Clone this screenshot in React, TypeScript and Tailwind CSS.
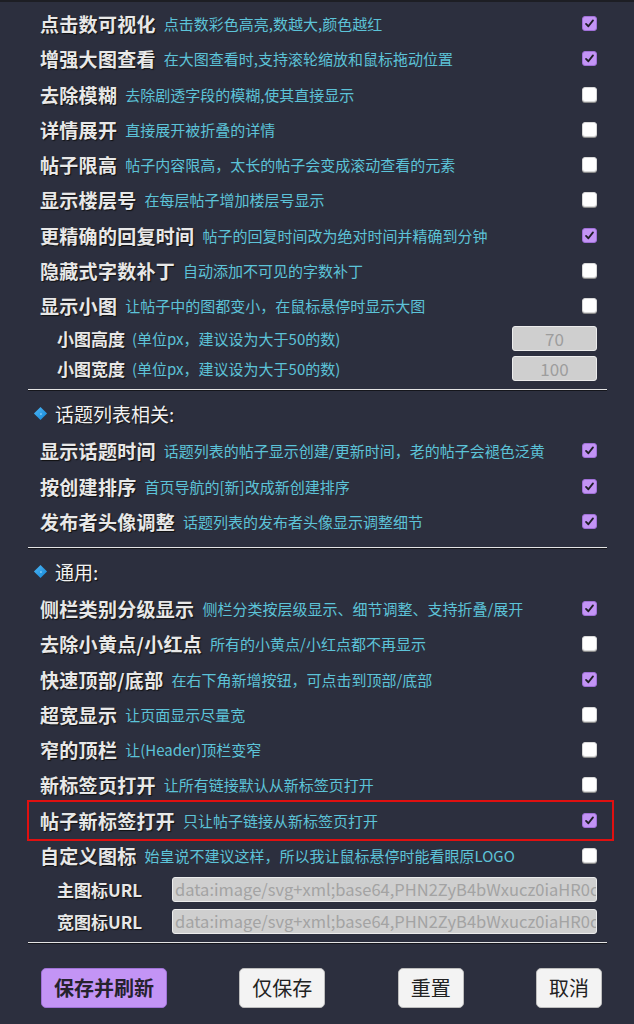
import React from 'react';

type Opt = { title: string; desc: string; checked: boolean; highlight?: boolean };

const postOpts: Opt[] = [
  { title: '点击数可视化', desc: '点击数彩色高亮,数越大,颜色越红', checked: true },
  { title: '增强大图查看', desc: '在大图查看时,支持滚轮缩放和鼠标拖动位置', checked: true },
  { title: '去除模糊', desc: '去除剧透字段的模糊,使其直接显示', checked: false },
  { title: '详情展开', desc: '直接展开被折叠的详情', checked: false },
  { title: '帖子限高', desc: '帖子内容限高，太长的帖子会变成滚动查看的元素', checked: false },
  { title: '显示楼层号', desc: '在每层帖子增加楼层号显示', checked: false },
  { title: '更精确的回复时间', desc: '帖子的回复时间改为绝对时间并精确到分钟', checked: true },
  { title: '隐藏式字数补丁', desc: '自动添加不可见的字数补丁', checked: false },
  { title: '显示小图', desc: '让帖子中的图都变小，在鼠标悬停时显示大图', checked: false },
];

const topicOpts: Opt[] = [
  { title: '显示话题时间', desc: '话题列表的帖子显示创建/更新时间，老的帖子会褪色泛黄', checked: true },
  { title: '按创建排序', desc: '首页导航的[新]改成新创建排序', checked: true },
  { title: '发布者头像调整', desc: '话题列表的发布者头像显示调整细节', checked: true },
];

const commonOpts: Opt[] = [
  { title: '侧栏类别分级显示', desc: '侧栏分类按层级显示、细节调整、支持折叠/展开', checked: true },
  { title: '去除小黄点/小红点', desc: '所有的小黄点/小红点都不再显示', checked: false },
  { title: '快速顶部/底部', desc: '在右下角新增按钮，可点击到顶部/底部', checked: true },
  { title: '超宽显示', desc: '让页面显示尽量宽', checked: false },
  { title: '窄的顶栏', desc: '让(Header)顶栏变窄', checked: false },
  { title: '新标签页打开', desc: '让所有链接默认从新标签页打开', checked: false },
  { title: '帖子新标签打开', desc: '只让帖子链接从新标签页打开', checked: true, highlight: true },
  { title: '自定义图标', desc: '始皇说不建议这样，所以我让鼠标悬停时能看眼原LOGO', checked: false },
];

// the field is narrower than the value, so it gets clipped like in the real input
const URL_VAL = 'data:image/svg+xml;base64,PHN2ZyB4bWxucz0iaHR0cD';

function Check({ on }: { on: boolean }) {
  return on ? (
    <div className="w-[15px] h-[15px] rounded-[3px] bg-[#c394f5] border border-[#a070d8] flex items-center justify-center">
      <svg width="11" height="11" viewBox="0 0 12 12">
        <path d="M2.2 6.4 L4.8 9 L9.8 2.6" fill="none" stroke="#1f1f27" strokeWidth="2" strokeLinecap="round" strokeLinejoin="round" />
      </svg>
    </div>
  ) : (
    <div className="w-[15px] h-[15px] rounded-[3px] bg-white border border-[#d8d8d8] shadow-[0_1px_0_#8a8a8a]" />
  );
}

function Row({ o }: { o: Opt }) {
  return (
    <div
      className={
        o.highlight
          ? 'h-[35.25px] flex items-center ml-[2px] -mr-[5px] pl-[10px] pr-[14px] outline-2 outline-offset-1 outline-[#e01010]'
          : 'h-[35.25px] flex items-center pl-[12px] pr-[9px]'
      }
    >
      <span className="text-[19px] leading-none font-bold tracking-[0.3px] text-[#e8e8e8] [text-shadow:1px_1px_1px_#111] whitespace-nowrap">
        {o.title}
      </span>
      <span className="ml-[8px] text-[15px] leading-none text-[#5cc3d8] whitespace-nowrap">{o.desc}</span>
      <div className="ml-auto">
        <Check on={o.checked} />
      </div>
    </div>
  );
}

function Diamond() {
  return (
    <svg width="15" height="15" viewBox="0 0 16 16">
      <defs>
        <linearGradient id="dg" x1="0" y1="0" x2="1" y2="1">
          <stop offset="0" stopColor="#4fb8f5" />
          <stop offset="1" stopColor="#1386d8" />
        </linearGradient>
      </defs>
      <path d="M8 1 L15 8 L8 15 L1 8 Z" fill="url(#dg)" />
      <circle cx="8.5" cy="8.5" r="0.9" fill="#9ed8ff" />
    </svg>
  );
}

function Section({ label }: { label: string }) {
  return (
    <div className="h-[43px] pt-[14px] flex items-start gap-[7px] pl-[5px]">
      <div className="mt-[2px]">
        <Diamond />
      </div>
      <span className="text-[19px] leading-[20px] text-[#f2f2f2] [text-shadow:1px_1px_1px_#111]">{label}</span>
    </div>
  );
}

function Sep() {
  return <div className="h-px bg-[#e4e4e4] mr-[-1px] shadow-[0_1px_0_#15161c]" />;
}

function Btn({ label, primary }: { label: string; primary?: boolean }) {
  return (
    <button
      className={
        primary
          ? 'h-[40px] px-[12px] rounded-[5px] bg-[#c394f5] border border-[#9f72d6] text-[20px] font-bold text-[#26222e]'
          : 'h-[40px] px-[12px] rounded-[5px] bg-[#f3f3f3] border border-[#bdbdbd] text-[20px] text-[#222]'
      }
    >
      {label}
    </button>
  );
}

export default function App() {
  return (
    <div
      className="w-[634px] h-[1024px] bg-[#2c2f3e] border-t-2 border-[#1d1e24] px-[28px] pt-[4px] overflow-hidden"
      style={{ fontFamily: '"Noto Sans CJK SC", "Noto Sans", sans-serif' }}
    >
      {postOpts.map((o) => (
        <Row key={o.title} o={o} />
      ))}

      {/* 小图尺寸 */}
      {[
        ['小图高度', '70'],
        ['小图宽度', '100'],
      ].map(([label, val]) => (
        <div key={label} className="h-[30px] flex items-center pl-[29px] pr-[9px]">
          <span className="text-[17px] leading-none font-bold text-[#e8e8e8] [text-shadow:1px_1px_1px_#111]">{label}</span>
          <span className="ml-[7px] text-[15px] leading-none text-[#5cc3d8]">(单位px，建议设为大于50的数)</span>
          <div className="ml-auto w-[85px] h-[25px] rounded-[3px] bg-[#cfcfcf] border border-[#ececec] flex items-center justify-center text-[17px] leading-none text-[#9d9d9d]">
            {val}
          </div>
        </div>
      ))}

      <div className="mt-[6px]">
        <Sep />
      </div>
      <Section label="话题列表相关:" />
      {topicOpts.map((o) => (
        <Row key={o.title} o={o} />
      ))}

      <div className="mt-[8px]">
        <Sep />
      </div>
      <Section label="通用:" />
      {commonOpts.map((o) => (
        <Row key={o.title} o={o} />
      ))}

      {['主图标URL', '宽图标URL'].map((label) => (
        <div key={label} className="h-[32px] flex items-center pl-[29px] pr-[9px]">
          <span className="w-[115px] shrink-0 text-[17px] leading-none font-bold text-[#e8e8e8] [text-shadow:1px_1px_1px_#111]">
            {label}
          </span>
          <div className="flex-1 min-w-0 h-[25px] rounded-[3px] bg-[#cfcfcf] border border-[#ececec] overflow-hidden flex items-center pl-[2px]">
            <span className="text-[16.5px] leading-none text-[#a3a3a3] whitespace-nowrap">{URL_VAL}</span>
          </div>
        </div>
      ))}

      <div className="mt-[5px]">
        <Sep />
      </div>

      <div className="mt-[25px] flex justify-between pl-[13px] pr-[4px]">
        <Btn label="保存并刷新" primary />
        <Btn label="仅保存" />
        <Btn label="重置" />
        <Btn label="取消" />
      </div>
    </div>
  );
}
